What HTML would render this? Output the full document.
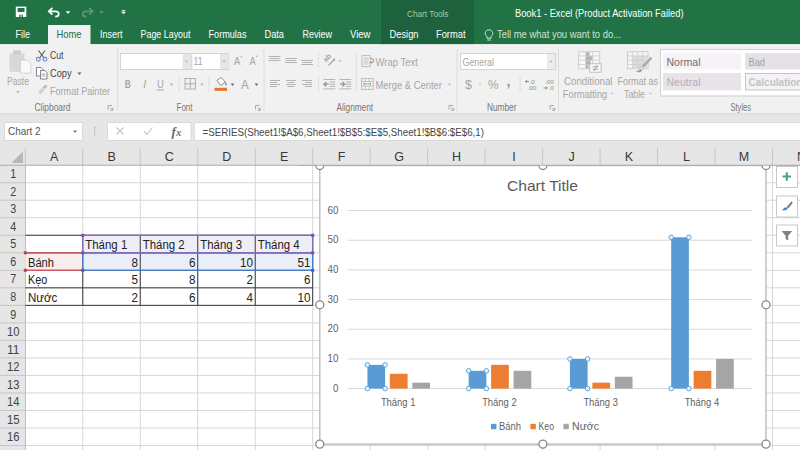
<!DOCTYPE html>
<html><head><meta charset="utf-8"><title>Excel</title>
<style>
html,body{margin:0;padding:0;background:#fff;overflow:hidden}
svg{display:block;font-family:"Liberation Sans", sans-serif}
</style></head><body>
<svg width="800" height="450" viewBox="0 0 800 450">
<rect x="0" y="0" width="800" height="450" fill="#ffffff"/>
<rect x="0" y="0" width="800" height="44.3" fill="#217346"/>
<rect x="381" y="0" width="93" height="44.3" fill="#1d623c"/>
<rect x="0" y="44.3" width="800" height="69.2" fill="#f1f1f1"/>
<rect x="0" y="113.5" width="800" height="33" fill="#e6e6e6"/>
<line x1="0" y1="113.7" x2="800" y2="113.7" stroke="#d8d8d8" stroke-width="1"/>
<g><rect x="15.8" y="6.6" width="10.5" height="10.4" fill="#fff"/><rect x="17.6" y="8" width="6.9" height="4" fill="#217346"/><rect x="19.3" y="14.6" width="1.3" height="2.4" fill="#217346"/><rect x="21.6" y="14.6" width="1.3" height="2.4" fill="#217346"/></g>
<path d="M52.4,7.8 L48.8,11.3 L52.4,14.7 M49.2,11.3 H55.2 C60,11.3 60,16.6 55.2,16.6" fill="none" stroke="#fff" stroke-width="1.7" stroke-linejoin="miter"/>
<path d="M65.8,11.200000000000001 L70.2,11.200000000000001 L68,13.9 Z" fill="#fff"/>
<path d="M89.1,7.8 L92.7,11.3 L89.1,14.7 M92.3,11.3 H86.3 C81.5,11.3 81.5,16.6 86.3,16.6" fill="none" stroke="#5a9675" stroke-width="1.7"/>
<path d="M99.3,11.200000000000001 L103.7,11.200000000000001 L101.5,13.9 Z" fill="#5f9a79"/>
<path d="M121.7,10.4 h3.6 M121.7,12 l1.8,1.8 l1.8,-1.8 z" stroke="#fff" stroke-width="0.8" fill="#fff"/>
<text x="407" y="16.8" font-size="9.6" fill="#9fc9b1" textLength="41.5" lengthAdjust="spacingAndGlyphs">Chart Tools</text>
<text x="515" y="17.3" font-size="11" fill="#ffffff" textLength="168.5" lengthAdjust="spacingAndGlyphs">Book1 - Excel (Product Activation Failed)</text>
<rect x="48" y="25" width="42.5" height="20" fill="#f1f1f1"/>
<text x="15.5" y="38.4" font-size="10.9" fill="#fff" textLength="14.5" lengthAdjust="spacingAndGlyphs">File</text>
<text x="56.5" y="38.4" font-size="10.9" fill="#217346" textLength="25" lengthAdjust="spacingAndGlyphs">Home</text>
<text x="100" y="38.4" font-size="10.9" fill="#fff" textLength="22.5" lengthAdjust="spacingAndGlyphs">Insert</text>
<text x="140.5" y="38.4" font-size="10.9" fill="#fff" textLength="50" lengthAdjust="spacingAndGlyphs">Page Layout</text>
<text x="208.5" y="38.4" font-size="10.9" fill="#fff" textLength="38" lengthAdjust="spacingAndGlyphs">Formulas</text>
<text x="264.5" y="38.4" font-size="10.9" fill="#fff" textLength="19.5" lengthAdjust="spacingAndGlyphs">Data</text>
<text x="302.5" y="38.4" font-size="10.9" fill="#fff" textLength="29.5" lengthAdjust="spacingAndGlyphs">Review</text>
<text x="350" y="38.4" font-size="10.9" fill="#fff" textLength="20.5" lengthAdjust="spacingAndGlyphs">View</text>
<text x="389.5" y="38.4" font-size="10.9" fill="#fff" textLength="29" lengthAdjust="spacingAndGlyphs">Design</text>
<text x="436" y="38.4" font-size="10.9" fill="#fff" textLength="29.5" lengthAdjust="spacingAndGlyphs">Format</text>
<g fill="none" stroke="#d5e7dc" stroke-width="1"><path d="M487,36.6 C484.2,34.3 484.8,29.9 489,29.9 C493.2,29.9 493.8,34.3 491,36.6 L491,38.2 L487,38.2 Z"/><line x1="487.3" y1="40" x2="490.7" y2="40"/></g>
<text x="497" y="38.4" font-size="10.9" fill="#cfe2d6" textLength="124" lengthAdjust="spacingAndGlyphs">Tell me what you want to do...</text>
<line x1="117.6" y1="49" x2="117.6" y2="111" stroke="#dcdcdc" stroke-width="1"/>
<line x1="264" y1="49" x2="264" y2="111" stroke="#dcdcdc" stroke-width="1"/>
<line x1="457" y1="49" x2="457" y2="111" stroke="#dcdcdc" stroke-width="1"/>
<line x1="558.5" y1="49" x2="558.5" y2="111" stroke="#dcdcdc" stroke-width="1"/>
<g opacity="0.6"><rect x="9.5" y="53.3" width="15" height="18.5" fill="#cfc6c6"/><rect x="13" y="50.3" width="8" height="4.2" rx="1" fill="#bdb5b5"/><path d="M20.5,60.3 h6.8 l3.5,3.5 v9.4 h-10.3 z" fill="#fff" stroke="#bfbfbf" stroke-width="0.9"/></g>
<text x="7" y="85" font-size="11" fill="#a6a6a6" textLength="22" lengthAdjust="spacingAndGlyphs">Paste</text>
<path d="M16,91.0 L20,91.0 L18,93.5 Z" fill="#b8b8b8"/>
<g fill="none" stroke-width="1.1"><path d="M38.5,50.5 L44,58 M45,50.5 L39.5,58" stroke="#555"/><circle cx="38.3" cy="59.3" r="1.9" stroke="#5b8cc9"/><circle cx="45" cy="59.3" r="1.9" stroke="#5b8cc9"/></g>
<text x="50" y="59" font-size="11" fill="#444444" textLength="13.5" lengthAdjust="spacingAndGlyphs">Cut</text>
<g fill="#fff" stroke="#777" stroke-width="0.9"><path d="M36.5,67.5 h4.5 l2,2 v6.5 h-6.5 z"/><path d="M40.5,70.5 h4.5 l2,2 v6.5 h-6.5 z"/></g><path d="M41.8,74 h3.6 M41.8,76 h3.6" stroke="#5b8cc9" stroke-width="0.8"/>
<text x="50" y="77" font-size="11" fill="#444444" textLength="21.5" lengthAdjust="spacingAndGlyphs">Copy</text>
<path d="M77.5,72.5 L81.5,72.5 L79.5,75.0 Z" fill="#666"/>
<g opacity="0.6"><path d="M38,92 l4,-4 l2.5,2.5 l-4,4 z" fill="#bdbdbd"/><path d="M42.5,87.5 l3,-3 l2,2 l-3,3 z" fill="#9a9a9a"/></g>
<text x="50" y="94.5" font-size="11" fill="#a6a6a6" textLength="60" lengthAdjust="spacingAndGlyphs">Format Painter</text>
<text x="34.5" y="110.5" font-size="10" fill="#777" textLength="36" lengthAdjust="spacingAndGlyphs">Clipboard</text>
<path d="M108.0,109.5 v-4 h4 M110.0,107.5 l2.5,2.5 M112.8,107.7 v2.6 h-2.6" fill="none" stroke="#a0a0a0" stroke-width="0.9"/>
<rect x="120.5" y="53.5" width="70.5" height="16" fill="#fff" stroke="#d4d4d4" stroke-width="1"/>
<rect x="182.5" y="54" width="8" height="15" fill="#e6e6e6"/>
<path d="M184.7,60.6 L188.3,60.6 L186.5,62.9 Z" fill="#bdbdbd"/>
<rect x="191.8" y="53.5" width="37" height="16" fill="#fff" stroke="#d4d4d4" stroke-width="1"/>
<rect x="220" y="54" width="8.3" height="15" fill="#e6e6e6"/>
<path d="M222.39999999999998,60.6 L226.0,60.6 L224.2,62.9 Z" fill="#bdbdbd"/>
<text x="193.6" y="65.2" font-size="10" fill="#a6a6a6" textLength="9" lengthAdjust="spacingAndGlyphs">11</text>
<text x="233.8" y="65.3" font-size="10.5" fill="#a6a6a6" textLength="6.6" lengthAdjust="spacingAndGlyphs">A</text>
<path d="M240.3,57.3 l1.2,-1.5 l1.2,1.5 z" fill="#a6a6a6"/>
<text x="249.5" y="65.3" font-size="10" fill="#a6a6a6" textLength="6.2" lengthAdjust="spacingAndGlyphs">A</text>
<path d="M255.6,55.8 l1.2,1.5 l1.2,-1.5 z" fill="#a6a6a6"/>
<text x="124.8" y="88" font-size="10.5" fill="#a6a6a6" textLength="6" lengthAdjust="spacingAndGlyphs" font-weight="bold">B</text>
<text x="143.3" y="88" font-size="10.5" fill="#a6a6a6" font-style="italic">I</text>
<text x="157" y="88" font-size="10.5" fill="#a6a6a6" textLength="6.8" lengthAdjust="spacingAndGlyphs">U</text>
<line x1="157" y1="90" x2="163.8" y2="90" stroke="#a6a6a6" stroke-width="1"/>
<path d="M169.7,83.6 L173.3,83.6 L171.5,85.9 Z" fill="#b8b8b8"/>
<line x1="179.2" y1="77" x2="179.2" y2="92" stroke="#dcdcdc" stroke-width="1"/>
<g fill="none" stroke="#b0b0b0" stroke-width="1"><rect x="185" y="78.5" width="10.5" height="10.5"/><path d="M190.3,78.5 v10.5 M185,83.8 h10.5"/></g>
<path d="M200.2,83.6 L203.8,83.6 L202,85.9 Z" fill="#b8b8b8"/>
<line x1="209" y1="77" x2="209" y2="92" stroke="#dcdcdc" stroke-width="1"/>
<g><path d="M217,80.5 l4,-3.2 l4.2,4.6 l-4.4,3.6 z" fill="#fff" stroke="#7a7a7a" stroke-width="0.9"/><path d="M225.5,82 c1.3,1.6 1.6,2.6 0.8,3.2 c-0.9,0.5 -1.6,-0.6 -0.8,-3.2z" fill="#4a7fc1"/><rect x="214.5" y="87.8" width="12.5" height="3" fill="#e8742a"/></g>
<path d="M230.7,83.6 L234.3,83.6 L232.5,85.9 Z" fill="#666"/>
<text x="241" y="88.5" font-size="12" fill="#a6a6a6" textLength="7.7" lengthAdjust="spacingAndGlyphs">A</text>
<path d="M254.7,83.6 L258.3,83.6 L256.5,85.9 Z" fill="#666"/>
<text x="176.5" y="110.5" font-size="10" fill="#777" textLength="16" lengthAdjust="spacingAndGlyphs">Font</text>
<path d="M255.5,109.5 v-4 h4 M257.5,107.5 l2.5,2.5 M260.3,107.7 v2.6 h-2.6" fill="none" stroke="#a0a0a0" stroke-width="0.9"/>
<line x1="268.5" y1="56.5" x2="280.5" y2="56.5" stroke="#b4b4b4" stroke-width="1"/>
<line x1="269.5" y1="58.5" x2="279.5" y2="58.5" stroke="#b4b4b4" stroke-width="1"/>
<line x1="268.5" y1="60.5" x2="280.5" y2="60.5" stroke="#b4b4b4" stroke-width="1"/>
<line x1="285" y1="58.5" x2="297" y2="58.5" stroke="#b4b4b4" stroke-width="1"/>
<line x1="286" y1="60.5" x2="296" y2="60.5" stroke="#b4b4b4" stroke-width="1"/>
<line x1="285" y1="62.5" x2="297" y2="62.5" stroke="#b4b4b4" stroke-width="1"/>
<line x1="301" y1="60.5" x2="313" y2="60.5" stroke="#b4b4b4" stroke-width="1"/>
<line x1="302" y1="62.5" x2="312" y2="62.5" stroke="#b4b4b4" stroke-width="1"/>
<line x1="301" y1="64.5" x2="313" y2="64.5" stroke="#b4b4b4" stroke-width="1"/>
<line x1="318.5" y1="52" x2="318.5" y2="68" stroke="#e0e0e0" stroke-width="1"/>
<g><text x="0" y="0" font-size="7.5" fill="#a8a8a8" font-weight="bold" transform="translate(326,62.5) rotate(-45)" textLength="8.5" lengthAdjust="spacingAndGlyphs">ab</text><path d="M328.5,65.3 L334.2,59.6" stroke="#9a9a9a" stroke-width="1.1" fill="none"/><path d="M335.3,58.4 l-2.6,0.6 l2,2 z" fill="#9a9a9a"/></g>
<path d="M338.2,60.1 L341.8,60.1 L340,62.4 Z" fill="#c4c4c4"/>
<line x1="356.3" y1="53" x2="356.3" y2="91" stroke="#dcdcdc" stroke-width="1"/>
<g stroke="#b8b8b8" stroke-width="0.9" fill="none"><rect x="362" y="55.6" width="8" height="11" fill="#f6f6f6"/><path d="M363.5,58 h5 M363.5,60 h5 M363.5,62 h5 M363.5,64 h5"/><path d="M370,58.5 h1.8 c2.4,0 2.4,4 0,4 h-1" stroke="#9c9c9c" stroke-width="1.1"/><path d="M371.6,60.8 l-1.6,1.7 l1.8,1.4" stroke="#9c9c9c" stroke-width="1"/></g>
<text x="375.5" y="65.6" font-size="11" fill="#a6a6a6" textLength="42.3" lengthAdjust="spacingAndGlyphs">Wrap Text</text>
<line x1="270" y1="80.5" x2="280" y2="80.5" stroke="#b4b4b4" stroke-width="1"/>
<line x1="270" y1="82.5" x2="277" y2="82.5" stroke="#b4b4b4" stroke-width="1"/>
<line x1="270" y1="84.5" x2="280" y2="84.5" stroke="#b4b4b4" stroke-width="1"/>
<line x1="270" y1="86.5" x2="277" y2="86.5" stroke="#b4b4b4" stroke-width="1"/>
<line x1="286.0" y1="80.5" x2="296.0" y2="80.5" stroke="#b4b4b4" stroke-width="1"/>
<line x1="287.5" y1="82.5" x2="294.5" y2="82.5" stroke="#b4b4b4" stroke-width="1"/>
<line x1="286.0" y1="84.5" x2="296.0" y2="84.5" stroke="#b4b4b4" stroke-width="1"/>
<line x1="287.5" y1="86.5" x2="294.5" y2="86.5" stroke="#b4b4b4" stroke-width="1"/>
<line x1="302" y1="80.5" x2="312" y2="80.5" stroke="#b4b4b4" stroke-width="1"/>
<line x1="305" y1="82.5" x2="312" y2="82.5" stroke="#b4b4b4" stroke-width="1"/>
<line x1="302" y1="84.5" x2="312" y2="84.5" stroke="#b4b4b4" stroke-width="1"/>
<line x1="305" y1="86.5" x2="312" y2="86.5" stroke="#b4b4b4" stroke-width="1"/>
<line x1="318.5" y1="76" x2="318.5" y2="92" stroke="#e0e0e0" stroke-width="1"/>
<g stroke="#b4b4b4" stroke-width="1" fill="none"><path d="M323.5,79.5 h11.8 M329.7,82 h5.6 M329.7,84.2 h5.6 M329.7,86.4 h5.6 M323.5,88.9 h11.8"/></g>
<path d="M328.7,84.2 h-4.6 m2.2,-2.4 l-2.4,2.4 l2.4,2.4" stroke="#909090" stroke-width="1.2" fill="none"/>
<g stroke="#b4b4b4" stroke-width="1" fill="none"><path d="M339.5,79.5 h11.8 M345.7,82 h5.6 M345.7,84.2 h5.6 M345.7,86.4 h5.6 M339.5,88.9 h11.8"/></g>
<path d="M339.9,84.2 h4.6 m-2.2,-2.4 l2.4,2.4 l-2.4,2.4" stroke="#909090" stroke-width="1.2" fill="none"/>
<g stroke="#b8b8b8" stroke-width="0.9" fill="none"><rect x="361.5" y="78.6" width="11.7" height="10.8" fill="#f8f8f8"/><path d="M361.5,81.5 h11.5 M361.5,86 h11.5 M365.3,78.5 v3 M369.2,78.5 v3 M365.3,86 v3 M369.2,86 v3"/><path d="M363.5,83.8 h7.5 m-1.3,-1.2 l1.3,1.2 l-1.3,1.2 M363.5,83.8 l1.3,-1.2 M363.5,83.8 l1.3,1.2" stroke="#8f8f8f" stroke-width="0.8"/></g>
<text x="375.5" y="88.8" font-size="11" fill="#a6a6a6" textLength="66.5" lengthAdjust="spacingAndGlyphs">Merge &amp; Center</text>
<path d="M447.7,83.6 L451.3,83.6 L449.5,85.9 Z" fill="#c4c4c4"/>
<text x="336.5" y="110.5" font-size="10" fill="#777" textLength="36.5" lengthAdjust="spacingAndGlyphs">Alignment</text>
<path d="M449.0,109.5 v-4 h4 M451.0,107.5 l2.5,2.5 M453.8,107.7 v2.6 h-2.6" fill="none" stroke="#a0a0a0" stroke-width="0.9"/>
<rect x="460.5" y="53.5" width="95" height="16" fill="#fff" stroke="#d4d4d4" stroke-width="1"/>
<rect x="547" y="54" width="8" height="15" fill="#ececec"/>
<path d="M549.2,60.6 L552.8,60.6 L551,62.9 Z" fill="#bdbdbd"/>
<text x="462.5" y="65.5" font-size="11" fill="#a6a6a6" textLength="31.5" lengthAdjust="spacingAndGlyphs">General</text>
<text x="465" y="89" font-size="12" fill="#a6a6a6" textLength="7" lengthAdjust="spacingAndGlyphs">$</text>
<path d="M478.4,83.7 L481.6,83.7 L480,85.8 Z" fill="#c4c4c4"/>
<text x="488" y="89" font-size="12" fill="#a6a6a6" textLength="10.5" lengthAdjust="spacingAndGlyphs">%</text>
<text x="506.5" y="86" font-size="14" fill="#999" font-weight="bold">,</text>
<line x1="520" y1="76" x2="520" y2="92" stroke="#dcdcdc" stroke-width="1"/>
<g fill="#8c8c8c" font-size="6.2"><text x="529.5" y="83.8">.0</text><text x="527.5" y="90.2">.00</text><text x="545" y="83.8">.00</text><text x="548.5" y="90.2">.0</text></g>
<path d="M529,81.5 h-3.5 m1.4,-1.4 l-1.4,1.4 l1.4,1.4 M543.5,88 h3.8 m-1.4,-1.4 l1.4,1.4 l-1.4,1.4" stroke="#808080" stroke-width="0.9" fill="none"/>
<text x="487" y="110.5" font-size="10" fill="#777" textLength="29.5" lengthAdjust="spacingAndGlyphs">Number</text>
<path d="M550.0,109.5 v-4 h4 M552.0,107.5 l2.5,2.5 M554.8,107.7 v2.6 h-2.6" fill="none" stroke="#a0a0a0" stroke-width="0.9"/>
<g><rect x="578.7" y="51.7" width="21" height="17" fill="#f7f7f7" stroke="#c8c8c8" stroke-width="0.9"/><path d="M585.7,51.7 v17 M592.7,51.7 v17 M578.7,55.9 h21 M578.7,60.2 h21 M578.7,64.5 h21" stroke="#cdcdcd" stroke-width="0.8"/><rect x="586" y="52.2" width="3.6" height="3.6" fill="#b4b4b4"/><rect x="586" y="56.3" width="6.4" height="3.7" fill="#b4b4b4"/><rect x="586" y="60.6" width="4.6" height="3.7" fill="#b4b4b4"/><rect x="586" y="64.9" width="2.6" height="3.5" fill="#b4b4b4"/><rect x="589.8" y="63.8" width="11.3" height="8.4" fill="#fbfbfb" stroke="#b8b8b8" stroke-width="0.9"/><path d="M592.7,66.8 h5.6 M592.7,69.3 h5.6 M597.3,65 l-3.4,6.2" stroke="#9a9a9a" stroke-width="0.9" fill="none"/></g>
<text x="564" y="85" font-size="11" fill="#a6a6a6" textLength="48.5" lengthAdjust="spacingAndGlyphs">Conditional</text>
<text x="562.8" y="97.5" font-size="11" fill="#a6a6a6" textLength="44.5" lengthAdjust="spacingAndGlyphs">Formatting</text>
<path d="M610.6,92.7 L613.8000000000001,92.7 L612.2,94.8 Z" fill="#c4c4c4"/>
<g><rect x="627.5" y="51.7" width="20.5" height="17" fill="#f5f3f5" stroke="#cacaca" stroke-width="0.9"/><rect x="632.6" y="55.9" width="15.4" height="12.8" fill="#dedade"/><path d="M632.6,51.7 v17 M637.7,51.7 v17 M642.8,51.7 v17 M627.5,55.9 h20.5 M627.5,60.2 h20.5 M627.5,64.5 h20.5" stroke="#cfcfcf" stroke-width="0.8"/><path d="M650.6,56.6 l1.9,1.9 l-8.4,9.6 l-2.6,-2.6 z" fill="#a9a9a9" stroke="#f1f1f1" stroke-width="0.7"/><circle cx="641.6" cy="68.2" r="1.6" fill="#f4f4f4" stroke="#a0a0a0" stroke-width="0.7"/><path d="M640.4,69.2 c-1.6,0.2 -2.4,2 -5,2.4 c2.8,1.4 6.4,0.8 6.6,-1.4 z" fill="#a0a0a0"/></g>
<text x="617.5" y="85" font-size="11" fill="#a6a6a6" textLength="40.5" lengthAdjust="spacingAndGlyphs">Format as</text>
<text x="624" y="97.5" font-size="11" fill="#a6a6a6" textLength="21" lengthAdjust="spacingAndGlyphs">Table</text>
<path d="M648.9,92.7 L652.1,92.7 L650.5,94.8 Z" fill="#c4c4c4"/>
<rect x="660.5" y="49.5" width="145" height="46.5" fill="#ffffff" stroke="#d4d4d4" stroke-width="1.2"/>
<rect x="663" y="53" width="78" height="16.5" fill="#f6f2f8"/>
<rect x="745" y="53" width="60" height="16.5" fill="#e6e1e6"/>
<rect x="663" y="73" width="78" height="17.5" fill="#e9e3ea"/>
<rect x="745.5" y="73.5" width="60" height="16.5" fill="#f5f2f5" stroke="#c4c4c4" stroke-width="1"/>
<text x="666.5" y="65.5" font-size="11" fill="#6e6e6e" textLength="34" lengthAdjust="spacingAndGlyphs">Normal</text>
<text x="748.5" y="65.5" font-size="11" fill="#a0a0a0" textLength="16.5" lengthAdjust="spacingAndGlyphs">Bad</text>
<text x="666.5" y="86" font-size="11" fill="#b4aeb8" textLength="34" lengthAdjust="spacingAndGlyphs">Neutral</text>
<text x="748.5" y="86" font-size="11" fill="#c2c2c2" textLength="54" lengthAdjust="spacingAndGlyphs" font-weight="bold">Calculation</text>
<text x="730.5" y="110.5" font-size="10" fill="#777" textLength="20.5" lengthAdjust="spacingAndGlyphs">Styles</text>
<rect x="4.5" y="122.5" width="78" height="18" fill="#fff" stroke="#dadada" stroke-width="1"/>
<text x="8" y="135" font-size="11" fill="#555" textLength="32.5" lengthAdjust="spacingAndGlyphs">Chart 2</text>
<path d="M73,130.5 L77,130.5 L75,133.0 Z" fill="#777"/>
<rect x="94" y="126.60000000000001" width="1.2" height="1.2" fill="#a8a8a8"/>
<rect x="94" y="129.1" width="1.2" height="1.2" fill="#a8a8a8"/>
<rect x="94" y="131.6" width="1.2" height="1.2" fill="#a8a8a8"/>
<rect x="94" y="134.1" width="1.2" height="1.2" fill="#a8a8a8"/>
<rect x="107.5" y="122.5" width="83.5" height="18" fill="#fff" stroke="#dadada" stroke-width="1"/>
<path d="M116.5,127.5 l7,7 M123.5,127.5 l-7,7" stroke="#c4c4c4" stroke-width="1.1" fill="none"/>
<path d="M144,131.5 l3,3 l5.5,-7" stroke="#c4c4c4" stroke-width="1.1" fill="none"/>
<text x="171.5" y="135.5" font-size="13" font-style="italic" font-weight="bold" fill="#6a6a6a" font-family='"Liberation Serif", serif'>f</text><text x="176.3" y="136.3" font-size="10" font-style="italic" font-weight="bold" fill="#6a6a6a" font-family='"Liberation Serif", serif'>x</text>
<rect x="194.3" y="122.5" width="612" height="18" fill="#fff" stroke="#dadada" stroke-width="1"/>
<text x="202.5" y="135.5" font-size="11" fill="#444" textLength="281.5" lengthAdjust="spacingAndGlyphs">=SERIES(Sheet1!$A$6,Sheet1!$B$5:$E$5,Sheet1!$B$6:$E$6,1)</text>
<rect x="0" y="146" width="800" height="19" fill="#e6e6e6"/>
<rect x="0" y="165" width="26" height="285" fill="#e6e6e6"/>
<line x1="25" y1="182.72" x2="800" y2="182.72" stroke="#d6d6d6" stroke-width="1"/>
<line x1="25" y1="200.24" x2="800" y2="200.24" stroke="#d6d6d6" stroke-width="1"/>
<line x1="25" y1="217.76" x2="800" y2="217.76" stroke="#d6d6d6" stroke-width="1"/>
<line x1="25" y1="235.28" x2="800" y2="235.28" stroke="#d6d6d6" stroke-width="1"/>
<line x1="25" y1="252.8" x2="800" y2="252.8" stroke="#d6d6d6" stroke-width="1"/>
<line x1="25" y1="270.32" x2="800" y2="270.32" stroke="#d6d6d6" stroke-width="1"/>
<line x1="25" y1="287.84" x2="800" y2="287.84" stroke="#d6d6d6" stroke-width="1"/>
<line x1="25" y1="305.36" x2="800" y2="305.36" stroke="#d6d6d6" stroke-width="1"/>
<line x1="25" y1="322.88" x2="800" y2="322.88" stroke="#d6d6d6" stroke-width="1"/>
<line x1="25" y1="340.4" x2="800" y2="340.4" stroke="#d6d6d6" stroke-width="1"/>
<line x1="25" y1="357.92" x2="800" y2="357.92" stroke="#d6d6d6" stroke-width="1"/>
<line x1="25" y1="375.44" x2="800" y2="375.44" stroke="#d6d6d6" stroke-width="1"/>
<line x1="25" y1="392.96" x2="800" y2="392.96" stroke="#d6d6d6" stroke-width="1"/>
<line x1="25" y1="410.48" x2="800" y2="410.48" stroke="#d6d6d6" stroke-width="1"/>
<line x1="25" y1="428.0" x2="800" y2="428.0" stroke="#d6d6d6" stroke-width="1"/>
<line x1="25" y1="445.52" x2="800" y2="445.52" stroke="#d6d6d6" stroke-width="1"/>
<line x1="25" y1="463.04" x2="800" y2="463.04" stroke="#d6d6d6" stroke-width="1"/>
<line x1="25.3" y1="165" x2="25.3" y2="450" stroke="#d6d6d6" stroke-width="1"/>
<line x1="82.78" y1="165" x2="82.78" y2="450" stroke="#d6d6d6" stroke-width="1"/>
<line x1="140.26" y1="165" x2="140.26" y2="450" stroke="#d6d6d6" stroke-width="1"/>
<line x1="197.74" y1="165" x2="197.74" y2="450" stroke="#d6d6d6" stroke-width="1"/>
<line x1="255.22" y1="165" x2="255.22" y2="450" stroke="#d6d6d6" stroke-width="1"/>
<line x1="312.7" y1="165" x2="312.7" y2="450" stroke="#d6d6d6" stroke-width="1"/>
<line x1="370.18" y1="165" x2="370.18" y2="450" stroke="#d6d6d6" stroke-width="1"/>
<line x1="427.66" y1="165" x2="427.66" y2="450" stroke="#d6d6d6" stroke-width="1"/>
<line x1="485.14" y1="165" x2="485.14" y2="450" stroke="#d6d6d6" stroke-width="1"/>
<line x1="542.62" y1="165" x2="542.62" y2="450" stroke="#d6d6d6" stroke-width="1"/>
<line x1="600.1" y1="165" x2="600.1" y2="450" stroke="#d6d6d6" stroke-width="1"/>
<line x1="657.58" y1="165" x2="657.58" y2="450" stroke="#d6d6d6" stroke-width="1"/>
<line x1="715.06" y1="165" x2="715.06" y2="450" stroke="#d6d6d6" stroke-width="1"/>
<line x1="772.54" y1="165" x2="772.54" y2="450" stroke="#d6d6d6" stroke-width="1"/>
<line x1="830.02" y1="165" x2="830.02" y2="450" stroke="#d6d6d6" stroke-width="1"/>
<line x1="0" y1="182.72" x2="25" y2="182.72" stroke="#c6c6c6" stroke-width="1"/>
<text x="13.2" y="178.35999999999999" font-size="12" fill="#444" text-anchor="middle" textLength="6" lengthAdjust="spacingAndGlyphs">1</text>
<line x1="0" y1="200.24" x2="25" y2="200.24" stroke="#c6c6c6" stroke-width="1"/>
<text x="13.2" y="195.88" font-size="12" fill="#444" text-anchor="middle" textLength="6" lengthAdjust="spacingAndGlyphs">2</text>
<line x1="0" y1="217.76" x2="25" y2="217.76" stroke="#c6c6c6" stroke-width="1"/>
<text x="13.2" y="213.4" font-size="12" fill="#444" text-anchor="middle" textLength="6" lengthAdjust="spacingAndGlyphs">3</text>
<line x1="0" y1="235.28" x2="25" y2="235.28" stroke="#c6c6c6" stroke-width="1"/>
<text x="13.2" y="230.92" font-size="12" fill="#444" text-anchor="middle" textLength="6" lengthAdjust="spacingAndGlyphs">4</text>
<line x1="0" y1="252.8" x2="25" y2="252.8" stroke="#c6c6c6" stroke-width="1"/>
<text x="13.2" y="248.44" font-size="12" fill="#444" text-anchor="middle" textLength="6" lengthAdjust="spacingAndGlyphs">5</text>
<line x1="0" y1="270.32" x2="25" y2="270.32" stroke="#c6c6c6" stroke-width="1"/>
<text x="13.2" y="265.96" font-size="12" fill="#444" text-anchor="middle" textLength="6" lengthAdjust="spacingAndGlyphs">6</text>
<line x1="0" y1="287.84" x2="25" y2="287.84" stroke="#c6c6c6" stroke-width="1"/>
<text x="13.2" y="283.47999999999996" font-size="12" fill="#444" text-anchor="middle" textLength="6" lengthAdjust="spacingAndGlyphs">7</text>
<line x1="0" y1="305.36" x2="25" y2="305.36" stroke="#c6c6c6" stroke-width="1"/>
<text x="13.2" y="301.0" font-size="12" fill="#444" text-anchor="middle" textLength="6" lengthAdjust="spacingAndGlyphs">8</text>
<line x1="0" y1="322.88" x2="25" y2="322.88" stroke="#c6c6c6" stroke-width="1"/>
<text x="13.2" y="318.52" font-size="12" fill="#444" text-anchor="middle" textLength="6" lengthAdjust="spacingAndGlyphs">9</text>
<line x1="0" y1="340.4" x2="25" y2="340.4" stroke="#c6c6c6" stroke-width="1"/>
<text x="13.2" y="336.03999999999996" font-size="12" fill="#444" text-anchor="middle" textLength="12.5" lengthAdjust="spacingAndGlyphs">10</text>
<line x1="0" y1="357.92" x2="25" y2="357.92" stroke="#c6c6c6" stroke-width="1"/>
<text x="13.2" y="353.55999999999995" font-size="12" fill="#444" text-anchor="middle" textLength="12.5" lengthAdjust="spacingAndGlyphs">11</text>
<line x1="0" y1="375.44" x2="25" y2="375.44" stroke="#c6c6c6" stroke-width="1"/>
<text x="13.2" y="371.0799999999999" font-size="12" fill="#444" text-anchor="middle" textLength="12.5" lengthAdjust="spacingAndGlyphs">12</text>
<line x1="0" y1="392.96" x2="25" y2="392.96" stroke="#c6c6c6" stroke-width="1"/>
<text x="13.2" y="388.59999999999997" font-size="12" fill="#444" text-anchor="middle" textLength="12.5" lengthAdjust="spacingAndGlyphs">13</text>
<line x1="0" y1="410.48" x2="25" y2="410.48" stroke="#c6c6c6" stroke-width="1"/>
<text x="13.2" y="406.11999999999995" font-size="12" fill="#444" text-anchor="middle" textLength="12.5" lengthAdjust="spacingAndGlyphs">14</text>
<line x1="0" y1="428.0" x2="25" y2="428.0" stroke="#c6c6c6" stroke-width="1"/>
<text x="13.2" y="423.64" font-size="12" fill="#444" text-anchor="middle" textLength="12.5" lengthAdjust="spacingAndGlyphs">15</text>
<line x1="0" y1="445.52" x2="25" y2="445.52" stroke="#c6c6c6" stroke-width="1"/>
<text x="13.2" y="441.15999999999997" font-size="12" fill="#444" text-anchor="middle" textLength="12.5" lengthAdjust="spacingAndGlyphs">16</text>
<line x1="0" y1="463.04" x2="25" y2="463.04" stroke="#c6c6c6" stroke-width="1"/>
<text x="13.2" y="458.67999999999995" font-size="12" fill="#444" text-anchor="middle" textLength="12.5" lengthAdjust="spacingAndGlyphs">17</text>
<line x1="25.5" y1="165" x2="25.5" y2="450" stroke="#c0c0c0" stroke-width="1"/>
<line x1="25.3" y1="148" x2="25.3" y2="165" stroke="#c6c6c6" stroke-width="1"/>
<text x="54.24" y="160.6" font-size="12.5" fill="#383838" text-anchor="middle">A</text>
<line x1="82.78" y1="148" x2="82.78" y2="165" stroke="#c6c6c6" stroke-width="1"/>
<text x="111.72" y="160.6" font-size="12.5" fill="#383838" text-anchor="middle">B</text>
<line x1="140.26" y1="148" x2="140.26" y2="165" stroke="#c6c6c6" stroke-width="1"/>
<text x="169.2" y="160.6" font-size="12.5" fill="#383838" text-anchor="middle">C</text>
<line x1="197.74" y1="148" x2="197.74" y2="165" stroke="#c6c6c6" stroke-width="1"/>
<text x="226.68" y="160.6" font-size="12.5" fill="#383838" text-anchor="middle">D</text>
<line x1="255.22" y1="148" x2="255.22" y2="165" stroke="#c6c6c6" stroke-width="1"/>
<text x="284.15999999999997" y="160.6" font-size="12.5" fill="#383838" text-anchor="middle">E</text>
<line x1="312.7" y1="148" x2="312.7" y2="165" stroke="#c6c6c6" stroke-width="1"/>
<text x="341.64" y="160.6" font-size="12.5" fill="#383838" text-anchor="middle">F</text>
<line x1="370.18" y1="148" x2="370.18" y2="165" stroke="#c6c6c6" stroke-width="1"/>
<text x="399.12" y="160.6" font-size="12.5" fill="#383838" text-anchor="middle">G</text>
<line x1="427.66" y1="148" x2="427.66" y2="165" stroke="#c6c6c6" stroke-width="1"/>
<text x="456.59999999999997" y="160.6" font-size="12.5" fill="#383838" text-anchor="middle">H</text>
<line x1="485.14" y1="148" x2="485.14" y2="165" stroke="#c6c6c6" stroke-width="1"/>
<text x="514.08" y="160.6" font-size="12.5" fill="#383838" text-anchor="middle">I</text>
<line x1="542.62" y1="148" x2="542.62" y2="165" stroke="#c6c6c6" stroke-width="1"/>
<text x="571.56" y="160.6" font-size="12.5" fill="#383838" text-anchor="middle">J</text>
<line x1="600.1" y1="148" x2="600.1" y2="165" stroke="#c6c6c6" stroke-width="1"/>
<text x="629.04" y="160.6" font-size="12.5" fill="#383838" text-anchor="middle">K</text>
<line x1="657.58" y1="148" x2="657.58" y2="165" stroke="#c6c6c6" stroke-width="1"/>
<text x="686.52" y="160.6" font-size="12.5" fill="#383838" text-anchor="middle">L</text>
<line x1="715.06" y1="148" x2="715.06" y2="165" stroke="#c6c6c6" stroke-width="1"/>
<text x="744.0" y="160.6" font-size="12.5" fill="#383838" text-anchor="middle">M</text>
<line x1="772.54" y1="148" x2="772.54" y2="165" stroke="#c6c6c6" stroke-width="1"/>
<text x="801.48" y="160.6" font-size="12.5" fill="#383838" text-anchor="middle">N</text>
<line x1="0" y1="165.2" x2="800" y2="165.2" stroke="#ababab" stroke-width="1.1"/>
<path d="M23,151.5 L23,163 L11.5,163 Z" fill="#b7b7b7"/>
<rect x="82.78" y="235.28" width="229.92" height="17.52000000000001" fill="#f1edf7"/>
<rect x="82.78" y="252.8" width="229.92" height="17.519999999999982" fill="#e9eef8"/>
<rect x="25.3" y="252.8" width="57.480000000000004" height="17.519999999999982" fill="#f9ecec"/>
<line x1="25.3" y1="235.28" x2="312.7" y2="235.28" stroke="#3a3a3a" stroke-width="1"/>
<line x1="25.3" y1="252.8" x2="312.7" y2="252.8" stroke="#3a3a3a" stroke-width="1"/>
<line x1="25.3" y1="270.32" x2="312.7" y2="270.32" stroke="#3a3a3a" stroke-width="1"/>
<line x1="25.3" y1="287.84" x2="312.7" y2="287.84" stroke="#3a3a3a" stroke-width="1"/>
<line x1="25.3" y1="305.36" x2="312.7" y2="305.36" stroke="#3a3a3a" stroke-width="1"/>
<line x1="82.78" y1="235.28" x2="82.78" y2="305.36" stroke="#3a3a3a" stroke-width="1"/>
<line x1="140.26" y1="235.28" x2="140.26" y2="305.36" stroke="#3a3a3a" stroke-width="1"/>
<line x1="197.74" y1="235.28" x2="197.74" y2="305.36" stroke="#3a3a3a" stroke-width="1"/>
<line x1="255.22" y1="235.28" x2="255.22" y2="305.36" stroke="#3a3a3a" stroke-width="1"/>
<line x1="312.7" y1="235.28" x2="312.7" y2="305.36" stroke="#3a3a3a" stroke-width="1"/>
<rect x="82.78" y="235.28" width="229.92" height="17.52000000000001" fill="none" stroke="#8c6cc2" stroke-width="1.15"/>
<rect x="82.78" y="252.8" width="229.92" height="17.519999999999982" fill="none" stroke="#477fd0" stroke-width="1.15"/>
<line x1="25.3" y1="252.8" x2="82.78" y2="252.8" stroke="#cc5560" stroke-width="1.3"/>
<line x1="25.3" y1="270.32" x2="82.78" y2="270.32" stroke="#cc5560" stroke-width="1.3"/>
<line x1="82.78" y1="235.28" x2="312.7" y2="235.28" stroke="#8c6cc2" stroke-width="1.15"/>
<line x1="82.78" y1="252.8" x2="312.7" y2="252.8" stroke="#8c6cc2" stroke-width="1.15"/>
<rect x="81.28" y="233.78" width="3" height="3" fill="#7251a8"/>
<rect x="311.2" y="233.78" width="3" height="3" fill="#7251a8"/>
<rect x="81.28" y="251.3" width="3" height="3" fill="#7251a8"/>
<rect x="311.2" y="251.3" width="3" height="3" fill="#7251a8"/>
<rect x="81.28" y="268.82" width="3" height="3" fill="#2f68b8"/>
<rect x="311.2" y="268.82" width="3" height="3" fill="#2f68b8"/>
<rect x="23.8" y="251.3" width="3" height="3" fill="#b8424a"/>
<rect x="23.8" y="268.82" width="3" height="3" fill="#b8424a"/>
<text x="85.28" y="249.48" font-size="12" fill="#222" textLength="42" lengthAdjust="spacingAndGlyphs">Tháng 1</text>
<text x="142.76" y="249.48" font-size="12" fill="#222" textLength="42" lengthAdjust="spacingAndGlyphs">Tháng 2</text>
<text x="200.24" y="249.48" font-size="12" fill="#222" textLength="42" lengthAdjust="spacingAndGlyphs">Tháng 3</text>
<text x="257.72" y="249.48" font-size="12" fill="#222" textLength="42" lengthAdjust="spacingAndGlyphs">Tháng 4</text>
<text x="28.0" y="266.7" font-size="12" fill="#222" textLength="26" lengthAdjust="spacingAndGlyphs">Bánh</text>
<text x="138.06" y="266.7" font-size="12" fill="#222" text-anchor="end" textLength="6.5" lengthAdjust="spacingAndGlyphs">8</text>
<text x="195.54000000000002" y="266.7" font-size="12" fill="#222" text-anchor="end" textLength="6.5" lengthAdjust="spacingAndGlyphs">6</text>
<text x="253.02" y="266.7" font-size="12" fill="#222" text-anchor="end" textLength="13" lengthAdjust="spacingAndGlyphs">10</text>
<text x="310.5" y="266.7" font-size="12" fill="#222" text-anchor="end" textLength="13" lengthAdjust="spacingAndGlyphs">51</text>
<text x="28.0" y="284.21999999999997" font-size="12" fill="#222" textLength="19.3" lengthAdjust="spacingAndGlyphs">Kẹo</text>
<text x="138.06" y="284.21999999999997" font-size="12" fill="#222" text-anchor="end" textLength="6.5" lengthAdjust="spacingAndGlyphs">5</text>
<text x="195.54000000000002" y="284.21999999999997" font-size="12" fill="#222" text-anchor="end" textLength="6.5" lengthAdjust="spacingAndGlyphs">8</text>
<text x="253.02" y="284.21999999999997" font-size="12" fill="#222" text-anchor="end" textLength="6.5" lengthAdjust="spacingAndGlyphs">2</text>
<text x="310.5" y="284.21999999999997" font-size="12" fill="#222" text-anchor="end" textLength="6.5" lengthAdjust="spacingAndGlyphs">6</text>
<text x="28.0" y="301.73999999999995" font-size="12" fill="#222" textLength="29.4" lengthAdjust="spacingAndGlyphs">Nước</text>
<text x="138.06" y="301.73999999999995" font-size="12" fill="#222" text-anchor="end" textLength="6.5" lengthAdjust="spacingAndGlyphs">2</text>
<text x="195.54000000000002" y="301.73999999999995" font-size="12" fill="#222" text-anchor="end" textLength="6.5" lengthAdjust="spacingAndGlyphs">6</text>
<text x="253.02" y="301.73999999999995" font-size="12" fill="#222" text-anchor="end" textLength="6.5" lengthAdjust="spacingAndGlyphs">4</text>
<text x="310.5" y="301.73999999999995" font-size="12" fill="#222" text-anchor="end" textLength="13" lengthAdjust="spacingAndGlyphs">10</text>
<rect x="319.8" y="165.5" width="446.2" height="278.6" fill="#ffffff" stroke="#bcbcbc" stroke-width="1.4"/>
<text x="507" y="191" font-size="15" fill="#5a5a5a" textLength="71" lengthAdjust="spacingAndGlyphs">Chart Title</text>
<line x1="347.5" y1="388.6" x2="752.5" y2="388.6" stroke="#d9d9d9" stroke-width="1"/>
<text x="338.4" y="391.6" font-size="10.3" fill="#5f5f5f" text-anchor="end" textLength="5.4" lengthAdjust="spacingAndGlyphs">0</text>
<line x1="347.5" y1="358.93" x2="752.5" y2="358.93" stroke="#d9d9d9" stroke-width="1"/>
<text x="338.4" y="361.93" font-size="10.3" fill="#5f5f5f" text-anchor="end" textLength="10.9" lengthAdjust="spacingAndGlyphs">10</text>
<line x1="347.5" y1="329.26" x2="752.5" y2="329.26" stroke="#d9d9d9" stroke-width="1"/>
<text x="338.4" y="332.26" font-size="10.3" fill="#5f5f5f" text-anchor="end" textLength="10.9" lengthAdjust="spacingAndGlyphs">20</text>
<line x1="347.5" y1="299.59" x2="752.5" y2="299.59" stroke="#d9d9d9" stroke-width="1"/>
<text x="338.4" y="302.59000000000003" font-size="10.3" fill="#5f5f5f" text-anchor="end" textLength="10.9" lengthAdjust="spacingAndGlyphs">30</text>
<line x1="347.5" y1="269.92" x2="752.5" y2="269.92" stroke="#d9d9d9" stroke-width="1"/>
<text x="338.4" y="272.92" font-size="10.3" fill="#5f5f5f" text-anchor="end" textLength="10.9" lengthAdjust="spacingAndGlyphs">40</text>
<line x1="347.5" y1="240.25" x2="752.5" y2="240.25" stroke="#d9d9d9" stroke-width="1"/>
<text x="338.4" y="243.25000000000003" font-size="10.3" fill="#5f5f5f" text-anchor="end" textLength="10.9" lengthAdjust="spacingAndGlyphs">50</text>
<line x1="347.5" y1="210.58" x2="752.5" y2="210.58" stroke="#d9d9d9" stroke-width="1"/>
<text x="338.4" y="213.58" font-size="10.3" fill="#5f5f5f" text-anchor="end" textLength="10.9" lengthAdjust="spacingAndGlyphs">60</text>
<rect x="367.43" y="364.86" width="17.7" height="23.74" fill="#5b9bd5"/>
<rect x="389.88" y="373.77" width="17.7" height="14.84" fill="#ed7d31"/>
<rect x="412.32" y="382.67" width="17.7" height="5.93" fill="#a5a5a5"/>
<text x="398.125" y="406" font-size="10.5" fill="#5f5f5f" text-anchor="middle" textLength="34.5" lengthAdjust="spacingAndGlyphs">Tháng 1</text>
<rect x="468.68" y="370.8" width="17.7" height="17.8" fill="#5b9bd5"/>
<rect x="491.12" y="364.86" width="17.7" height="23.74" fill="#ed7d31"/>
<rect x="513.58" y="370.8" width="17.7" height="17.8" fill="#a5a5a5"/>
<text x="499.375" y="406" font-size="10.5" fill="#5f5f5f" text-anchor="middle" textLength="34.5" lengthAdjust="spacingAndGlyphs">Tháng 2</text>
<rect x="569.93" y="358.93" width="17.7" height="29.67" fill="#5b9bd5"/>
<rect x="592.38" y="382.67" width="17.7" height="5.93" fill="#ed7d31"/>
<rect x="614.83" y="376.73" width="17.7" height="11.87" fill="#a5a5a5"/>
<text x="600.625" y="406" font-size="10.5" fill="#5f5f5f" text-anchor="middle" textLength="34.5" lengthAdjust="spacingAndGlyphs">Tháng 3</text>
<rect x="671.18" y="237.28" width="17.7" height="151.32" fill="#5b9bd5"/>
<rect x="693.63" y="370.8" width="17.7" height="17.8" fill="#ed7d31"/>
<rect x="716.08" y="358.93" width="17.7" height="29.67" fill="#a5a5a5"/>
<text x="701.875" y="406" font-size="10.5" fill="#5f5f5f" text-anchor="middle" textLength="34.5" lengthAdjust="spacingAndGlyphs">Tháng 4</text>
<circle cx="367.43" cy="364.86" r="2.3" fill="#e8f2fb" stroke="#4a9fe0" stroke-width="0.9"/>
<circle cx="385.12" cy="364.86" r="2.3" fill="#e8f2fb" stroke="#4a9fe0" stroke-width="0.9"/>
<circle cx="367.43" cy="388.6" r="2.3" fill="#e8f2fb" stroke="#4a9fe0" stroke-width="0.9"/>
<circle cx="385.12" cy="388.6" r="2.3" fill="#e8f2fb" stroke="#4a9fe0" stroke-width="0.9"/>
<circle cx="468.68" cy="370.8" r="2.3" fill="#e8f2fb" stroke="#4a9fe0" stroke-width="0.9"/>
<circle cx="486.38" cy="370.8" r="2.3" fill="#e8f2fb" stroke="#4a9fe0" stroke-width="0.9"/>
<circle cx="468.68" cy="388.6" r="2.3" fill="#e8f2fb" stroke="#4a9fe0" stroke-width="0.9"/>
<circle cx="486.38" cy="388.6" r="2.3" fill="#e8f2fb" stroke="#4a9fe0" stroke-width="0.9"/>
<circle cx="569.93" cy="358.93" r="2.3" fill="#e8f2fb" stroke="#4a9fe0" stroke-width="0.9"/>
<circle cx="587.63" cy="358.93" r="2.3" fill="#e8f2fb" stroke="#4a9fe0" stroke-width="0.9"/>
<circle cx="569.93" cy="388.6" r="2.3" fill="#e8f2fb" stroke="#4a9fe0" stroke-width="0.9"/>
<circle cx="587.63" cy="388.6" r="2.3" fill="#e8f2fb" stroke="#4a9fe0" stroke-width="0.9"/>
<circle cx="671.18" cy="237.28" r="2.3" fill="#e8f2fb" stroke="#4a9fe0" stroke-width="0.9"/>
<circle cx="688.88" cy="237.28" r="2.3" fill="#e8f2fb" stroke="#4a9fe0" stroke-width="0.9"/>
<circle cx="671.18" cy="388.6" r="2.3" fill="#e8f2fb" stroke="#4a9fe0" stroke-width="0.9"/>
<circle cx="688.88" cy="388.6" r="2.3" fill="#e8f2fb" stroke="#4a9fe0" stroke-width="0.9"/>
<rect x="491" y="423.8" width="5.4" height="5.4" fill="#5b9bd5"/>
<text x="499" y="430" font-size="10.5" fill="#5f5f5f" textLength="22" lengthAdjust="spacingAndGlyphs">Bánh</text>
<rect x="530.4" y="423.8" width="5.4" height="5.4" fill="#ed7d31"/>
<text x="538.5" y="430" font-size="10.5" fill="#5f5f5f" textLength="15.5" lengthAdjust="spacingAndGlyphs">Kẹo</text>
<rect x="563.4" y="423.8" width="5.4" height="5.4" fill="#a5a5a5"/>
<text x="572" y="430" font-size="10.5" fill="#5f5f5f" textLength="27" lengthAdjust="spacingAndGlyphs">Nước</text>
<circle cx="319.8" cy="165.5" r="4" fill="#fff" stroke="#8a8a8a" stroke-width="1.3"/>
<circle cx="542.9" cy="165.5" r="4" fill="#fff" stroke="#8a8a8a" stroke-width="1.3"/>
<circle cx="766" cy="165.5" r="4" fill="#fff" stroke="#8a8a8a" stroke-width="1.3"/>
<circle cx="319.8" cy="304.8" r="4" fill="#fff" stroke="#8a8a8a" stroke-width="1.3"/>
<circle cx="766" cy="304.8" r="4" fill="#fff" stroke="#8a8a8a" stroke-width="1.3"/>
<circle cx="319.8" cy="444.1" r="4" fill="#fff" stroke="#8a8a8a" stroke-width="1.3"/>
<circle cx="542.9" cy="444.1" r="4" fill="#fff" stroke="#8a8a8a" stroke-width="1.3"/>
<circle cx="766" cy="444.1" r="4" fill="#fff" stroke="#8a8a8a" stroke-width="1.3"/>
<rect x="300" y="146" width="500" height="19" fill="#e6e6e6"/>
<line x1="312.7" y1="148" x2="312.7" y2="165" stroke="#c6c6c6" stroke-width="1"/>
<text x="341.64" y="160.6" font-size="12.5" fill="#383838" text-anchor="middle">F</text>
<line x1="370.18" y1="148" x2="370.18" y2="165" stroke="#c6c6c6" stroke-width="1"/>
<text x="399.12" y="160.6" font-size="12.5" fill="#383838" text-anchor="middle">G</text>
<line x1="427.66" y1="148" x2="427.66" y2="165" stroke="#c6c6c6" stroke-width="1"/>
<text x="456.59999999999997" y="160.6" font-size="12.5" fill="#383838" text-anchor="middle">H</text>
<line x1="485.14" y1="148" x2="485.14" y2="165" stroke="#c6c6c6" stroke-width="1"/>
<text x="514.08" y="160.6" font-size="12.5" fill="#383838" text-anchor="middle">I</text>
<line x1="542.62" y1="148" x2="542.62" y2="165" stroke="#c6c6c6" stroke-width="1"/>
<text x="571.56" y="160.6" font-size="12.5" fill="#383838" text-anchor="middle">J</text>
<line x1="600.1" y1="148" x2="600.1" y2="165" stroke="#c6c6c6" stroke-width="1"/>
<text x="629.04" y="160.6" font-size="12.5" fill="#383838" text-anchor="middle">K</text>
<line x1="657.58" y1="148" x2="657.58" y2="165" stroke="#c6c6c6" stroke-width="1"/>
<text x="686.52" y="160.6" font-size="12.5" fill="#383838" text-anchor="middle">L</text>
<line x1="715.06" y1="148" x2="715.06" y2="165" stroke="#c6c6c6" stroke-width="1"/>
<text x="744.0" y="160.6" font-size="12.5" fill="#383838" text-anchor="middle">M</text>
<line x1="772.54" y1="148" x2="772.54" y2="165" stroke="#c6c6c6" stroke-width="1"/>
<text x="801.48" y="160.6" font-size="12.5" fill="#383838" text-anchor="middle">N</text>
<line x1="300" y1="165.2" x2="800" y2="165.2" stroke="#ababab" stroke-width="1.1"/>
<rect x="776.5" y="166.5" width="21" height="21" fill="#ffffff" stroke="#c8c8c8" stroke-width="1"/>
<rect x="776.5" y="196.0" width="21" height="21" fill="#ffffff" stroke="#c8c8c8" stroke-width="1"/>
<rect x="776.5" y="225.0" width="21" height="21" fill="#ffffff" stroke="#c8c8c8" stroke-width="1"/>
<path d="M786.8,172.3 v8.4 M782.6,176.5 h8.4" stroke="#4ea37a" stroke-width="2.1" fill="none"/>
<path d="M791.8,201.3 l-5.2,5.6 l1.5,1.5 l4.6,-5.3 z" fill="#777"/><path d="M786,207.3 c-1.8,0 -2.4,1.9 -4.2,2.6 c2.5,1 5.4,0.3 5.8,-1.3 z" fill="#4a80c6"/>
<path d="M781.6,231 h10.6 l-4,4.8 v4.6 l-2.6,-1.5 v-3.1 z" fill="#808080"/>
</svg></body></html>
